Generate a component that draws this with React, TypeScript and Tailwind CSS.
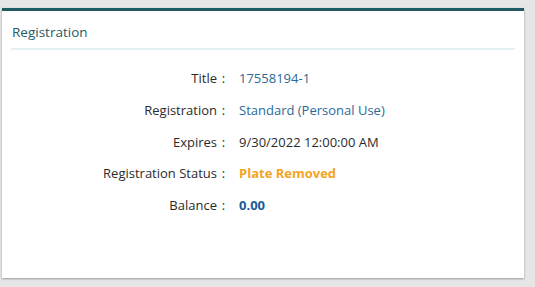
import React from "react";

const rows: { label: string; value: string; cls: string }[] = [
  { label: "Title", value: "17558194-1", cls: "text-[#2a6a9a]" },
  { label: "Registration", value: "Standard (Personal Use)", cls: "text-[#2a6a9a]" },
  { label: "Expires", value: "9/30/2022 12:00:00 AM", cls: "text-[#2b2b2b]" },
  { label: "Registration Status", value: "Plate Removed", cls: "text-[#f4a424] font-bold" },
  { label: "Balance", value: "0.00", cls: "text-[#1a5b9a] font-bold" },
];

export default function App() {
  return (
    <div className="w-[535px] h-[287px] bg-[#e6e6e6] pt-2 pl-[2px]" style={{ fontFamily: '"Open Sans", "Noto Sans", sans-serif' }}>
      <div className="w-[522px] h-[270px] bg-white border-t-[3px] border-[#1d5a62] shadow-[0_1px_2px_rgba(0,0,0,0.35)]">
        <div className="mx-[9px] pt-[11px] pb-[6px] border-b-2 border-[#e3f0f4]">
          <div className="text-[13.5px] leading-[20px] text-[#265a64] pl-px">Registration</div>
        </div>
        <div className="pt-[19px] flex flex-col gap-[12.75px] text-[13px] leading-[19px] text-[#2b2b2b]">
          {rows.map((r) => (
            <div key={r.label} className="flex">
              <div className="w-[215px] text-right">{r.label}</div>
              <div className="w-[13px] text-center">:</div>
              <div className={"pl-[9px] " + r.cls}>{r.value}</div>
            </div>
          ))}
        </div>
      </div>
    </div>
  );
}
